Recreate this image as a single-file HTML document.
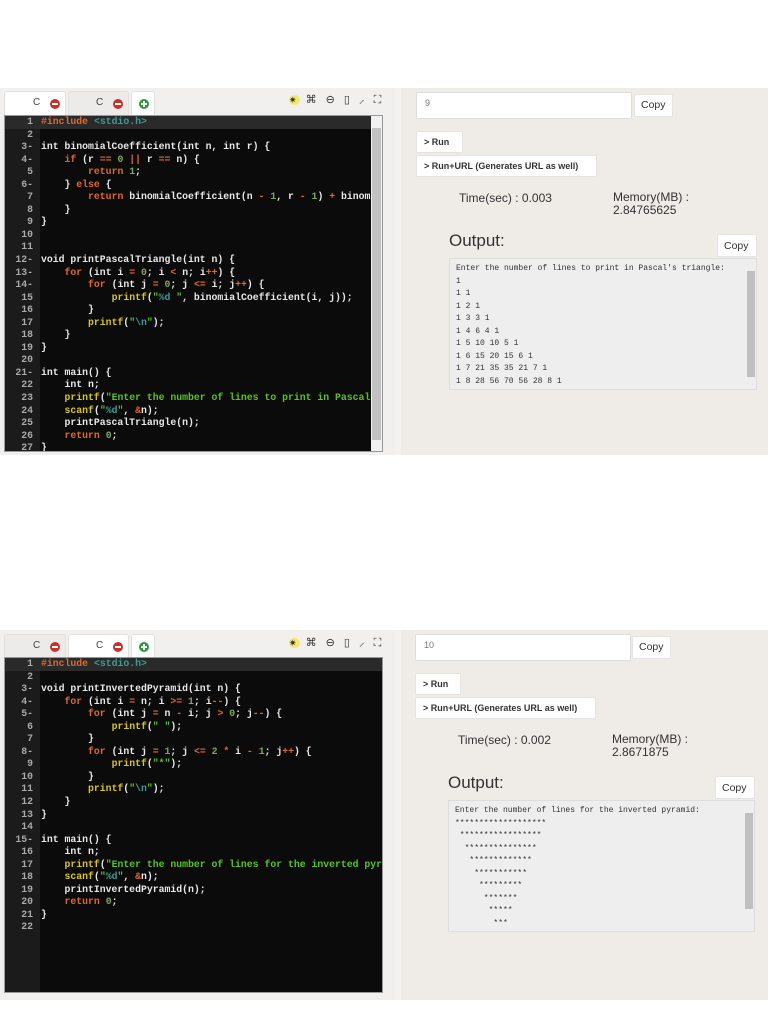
<!DOCTYPE html>
<html><head><meta charset="utf-8"><style>
*{margin:0;padding:0;box-sizing:border-box}
body{width:768px;height:1024px;background:#fff;position:relative;overflow:hidden;font-family:"Liberation Sans",sans-serif}
.panelL{position:absolute;left:0;width:395px;background:#f2f0ee}
.panelR{position:absolute;left:395px;width:373px;background:#efebe7;border-left:6px solid #f4f2f0}
.tab{position:absolute;height:25px;background:#fff;border:1px solid #e2e0de;border-bottom:none;border-radius:3px 3px 0 0}
.tab.g{background:#ecebea}
.tab .c{position:absolute;top:5px;font-size:10px;color:#444}
.dot{position:absolute;top:7px;width:10px;height:10px;border-radius:50%;background:#c8302c}
.dot::after{content:"";position:absolute;left:2px;top:4px;width:6px;height:2px;background:#fff}
.dot.gr{background:#2d9a3a}
.dot.gr::before{content:"";position:absolute;left:4px;top:2px;width:2px;height:6px;background:#fff}
.editor{position:absolute;left:4px;width:379px;background:#0b0b0b;border:1px solid #999;overflow:hidden}
.gut{position:absolute;left:0;top:0;bottom:0;width:35px;background:#1b1b1b}
.code{position:absolute;left:0;top:0;font-family:"Liberation Mono",monospace;font-size:9.8px;line-height:12.55px;color:#e8e8e8;white-space:pre;font-weight:bold}
.ln{display:inline-block;width:28px;text-align:right;color:#aaa;margin-right:8px}
.k{color:#e0692a}.f{color:#d8c526}.s{color:#58c41f}.n{color:#80a860}.t{color:#3a9c98}
.hl{background:#2a2a2a;display:block}
.sb{position:absolute;right:0;top:0;bottom:0;width:11px;background:#f0f0f0}
.sb i{position:absolute;left:1px;right:1px;top:12px;background:#c2c2c2}
.icons{position:absolute;font-size:11px;color:#333;letter-spacing:3px}
.btn{position:absolute;background:#fff;border:1px solid #e6e3e0;border-radius:2px;font-size:10px;color:#333}
.ta{position:absolute;background:#fff;border:1px solid #ddd;border-radius:2px;font-size:9px;color:#777;padding:5px 8px}
.txt{position:absolute;font-size:12px;color:#333}
.out{position:absolute;background:#eeeeee;border:1px solid #ddd;font-family:"Liberation Mono",monospace;font-size:8px;line-height:12.5px;color:#333;white-space:pre;padding:4px 6px;overflow:hidden}
.osb{position:absolute;right:0;top:0;bottom:0;width:11px;background:#eee}
.osb i{position:absolute;left:2px;right:1px;top:12px;bottom:12px;background:#c0c0c0}
</style></head><body>

<div class="panelL" style="top:88px;height:367px"></div>
<div class="panelR" style="top:88px;height:367px"></div>
<div class="tab" style="left:4px;top:91px;width:62px"><span class="c" style="left:28px">C</span><span class="dot" style="left:45px"></span></div>
<div class="tab g" style="left:68px;top:91px;width:61px"><span class="c" style="left:27px">C</span><span class="dot" style="left:44px"></span></div>
<div class="tab" style="left:131px;top:91px;width:24px"><span class="dot gr" style="left:7px"></span></div>
<div class="icons" style="left:289px;top:92px"><span style="color:#333;background:#f5e86a;border-radius:50%;font-size:9px">✷</span> ⌘ ⊖ ▯ ⸝ ⛶</div>
<div class="editor" style="top:115px;height:337px">
<div class="gut"></div>
<div class="code"><span class="hl"><span class="ln">1</span><span class="k">#include</span> <span class="t">&lt;stdio.h&gt;</span></span><span class="ln">2</span>
<span class="ln">3-</span>int binomialCoefficient(int n, int r) {
<span class="ln">4-</span>    <span class="k">if</span> (r <span class="k">==</span> <span class="n">0</span> <span class="k">||</span> r <span class="k">==</span> n) {
<span class="ln">5</span>        <span class="k">return</span> <span class="n">1</span>;
<span class="ln">6-</span>    } <span class="k">else</span> {
<span class="ln">7</span>        <span class="k">return</span> binomialCoefficient(n <span class="k">-</span> <span class="n">1</span>, r <span class="k">-</span> <span class="n">1</span>) <span class="k">+</span> binomialCoefficient
<span class="ln">8</span>    }
<span class="ln">9</span>}
<span class="ln">10</span>
<span class="ln">11</span>
<span class="ln">12-</span>void printPascalTriangle(int n) {
<span class="ln">13-</span>    <span class="k">for</span> (int i <span class="k">=</span> <span class="n">0</span>; i <span class="k">&lt;</span> n; i<span class="k">++</span>) {
<span class="ln">14-</span>        <span class="k">for</span> (int j <span class="k">=</span> <span class="n">0</span>; j <span class="k">&lt;=</span> i; j<span class="k">++</span>) {
<span class="ln">15</span>            <span class="f">printf</span>(<span class="s">"<span class="t">%d</span> "</span>, binomialCoefficient(i, j));
<span class="ln">16</span>        }
<span class="ln">17</span>        <span class="f">printf</span>(<span class="s">"<span class="t">\n</span>"</span>);
<span class="ln">18</span>    }
<span class="ln">19</span>}
<span class="ln">20</span>
<span class="ln">21-</span>int main() {
<span class="ln">22</span>    int n;
<span class="ln">23</span>    <span class="f">printf</span>(<span class="s">"Enter the number of lines to print in Pascal's triangle: "</span>);
<span class="ln">24</span>    <span class="f">scanf</span>(<span class="s">"<span class="t">%d</span>"</span>, <span class="k">&amp;</span>n);
<span class="ln">25</span>    printPascalTriangle(n);
<span class="ln">26</span>    <span class="k">return</span> <span class="n">0</span>;
<span class="ln">27</span>}</div>
<div class="sb"><i style="height:312px"></i></div>
</div>

<div class="ta" style="left:416px;top:92px;width:216px;height:27px">9</div>
<div class="btn" style="left:634px;top:94px;width:39px;height:23px;padding:4px 6px;font-size:10.5px">Copy</div>
<div class="btn" style="left:416px;top:131px;width:47px;height:22px;padding:5px 7px;font-weight:bold;font-size:9px">&gt; Run</div>
<div class="btn" style="left:416px;top:155px;width:181px;height:22px;padding:5px 7px;font-weight:bold;font-size:9px">&gt; Run+URL (Generates URL as well)</div>
<div class="txt" style="left:459px;top:191px">Time(sec) : 0.003</div>
<div class="txt" style="left:613px;top:191px;line-height:13px">Memory(MB) :<br>2.84765625</div>
<div class="txt" style="left:449px;top:231px;font-size:17px">Output:</div>
<div class="btn" style="left:717px;top:234px;width:40px;height:23px;padding:5px 6px;font-size:10.5px">Copy</div>
<div class="out" style="left:449px;top:258px;width:308px;height:132px">Enter the number of lines to print in Pascal's triangle:
1
1 1
1 2 1
1 3 3 1
1 4 6 4 1
1 5 10 10 5 1
1 6 15 20 15 6 1
1 7 21 35 35 21 7 1
1 8 28 56 70 56 28 8 1<div class="osb"><i></i></div></div>

<div class="panelL" style="top:630px;height:370px"></div>
<div class="panelR" style="top:630px;height:370px"></div>
<div class="tab g" style="left:4px;top:634px;width:62px"><span class="c" style="left:28px">C</span><span class="dot" style="left:45px"></span></div>
<div class="tab" style="left:68px;top:634px;width:61px"><span class="c" style="left:27px">C</span><span class="dot" style="left:44px"></span></div>
<div class="tab" style="left:131px;top:634px;width:24px"><span class="dot gr" style="left:7px"></span></div>
<div class="icons" style="left:289px;top:635px"><span style="color:#333;background:#f5e86a;border-radius:50%;font-size:9px">✷</span> ⌘ ⊖ ▯ ⸝ ⛶</div>
<div class="editor" style="top:657px;height:336px">
<div class="gut"></div>
<div class="code"><span class="hl"><span class="ln">1</span><span class="k">#include</span> <span class="t">&lt;stdio.h&gt;</span></span><span class="ln">2</span>
<span class="ln">3-</span>void printInvertedPyramid(int n) {
<span class="ln">4-</span>    <span class="k">for</span> (int i <span class="k">=</span> n; i <span class="k">&gt;=</span> <span class="n">1</span>; i<span class="k">--</span>) {
<span class="ln">5-</span>        <span class="k">for</span> (int j <span class="k">=</span> n <span class="k">-</span> i; j <span class="k">&gt;</span> <span class="n">0</span>; j<span class="k">--</span>) {
<span class="ln">6</span>            <span class="f">printf</span>(<span class="s">" "</span>);
<span class="ln">7</span>        }
<span class="ln">8-</span>        <span class="k">for</span> (int j <span class="k">=</span> <span class="n">1</span>; j <span class="k">&lt;=</span> <span class="n">2</span> <span class="k">*</span> i <span class="k">-</span> <span class="n">1</span>; j<span class="k">++</span>) {
<span class="ln">9</span>            <span class="f">printf</span>(<span class="s">"*"</span>);
<span class="ln">10</span>        }
<span class="ln">11</span>        <span class="f">printf</span>(<span class="s">"<span class="t">\n</span>"</span>);
<span class="ln">12</span>    }
<span class="ln">13</span>}
<span class="ln">14</span>
<span class="ln">15-</span>int main() {
<span class="ln">16</span>    int n;
<span class="ln">17</span>    <span class="f">printf</span>(<span class="s">"Enter the number of lines for the inverted pyramid: "</span>);
<span class="ln">18</span>    <span class="f">scanf</span>(<span class="s">"<span class="t">%d</span>"</span>, <span class="k">&amp;</span>n);
<span class="ln">19</span>    printInvertedPyramid(n);
<span class="ln">20</span>    <span class="k">return</span> <span class="n">0</span>;
<span class="ln">21</span>}
<span class="ln">22</span></div>
</div>

<div class="ta" style="left:415px;top:634px;width:216px;height:27px">10</div>
<div class="btn" style="left:632px;top:636px;width:39px;height:23px;padding:4px 6px;font-size:10.5px">Copy</div>
<div class="btn" style="left:415px;top:673px;width:46px;height:22px;padding:5px 7px;font-weight:bold;font-size:9px">&gt; Run</div>
<div class="btn" style="left:415px;top:697px;width:181px;height:22px;padding:5px 7px;font-weight:bold;font-size:9px">&gt; Run+URL (Generates URL as well)</div>
<div class="txt" style="left:458px;top:733px">Time(sec) : 0.002</div>
<div class="txt" style="left:612px;top:733px;line-height:13px">Memory(MB) :<br>2.8671875</div>
<div class="txt" style="left:448px;top:773px;font-size:17px">Output:</div>
<div class="btn" style="left:715px;top:776px;width:40px;height:23px;padding:5px 6px;font-size:10.5px">Copy</div>
<div class="out" style="left:448px;top:800px;width:307px;height:132px">Enter the number of lines for the inverted pyramid:
*******************
 *****************
  ***************
   *************
    ***********
     *********
      *******
       *****
        ***<div class="osb"><i style="bottom:22px"></i></div></div>
</body></html>
